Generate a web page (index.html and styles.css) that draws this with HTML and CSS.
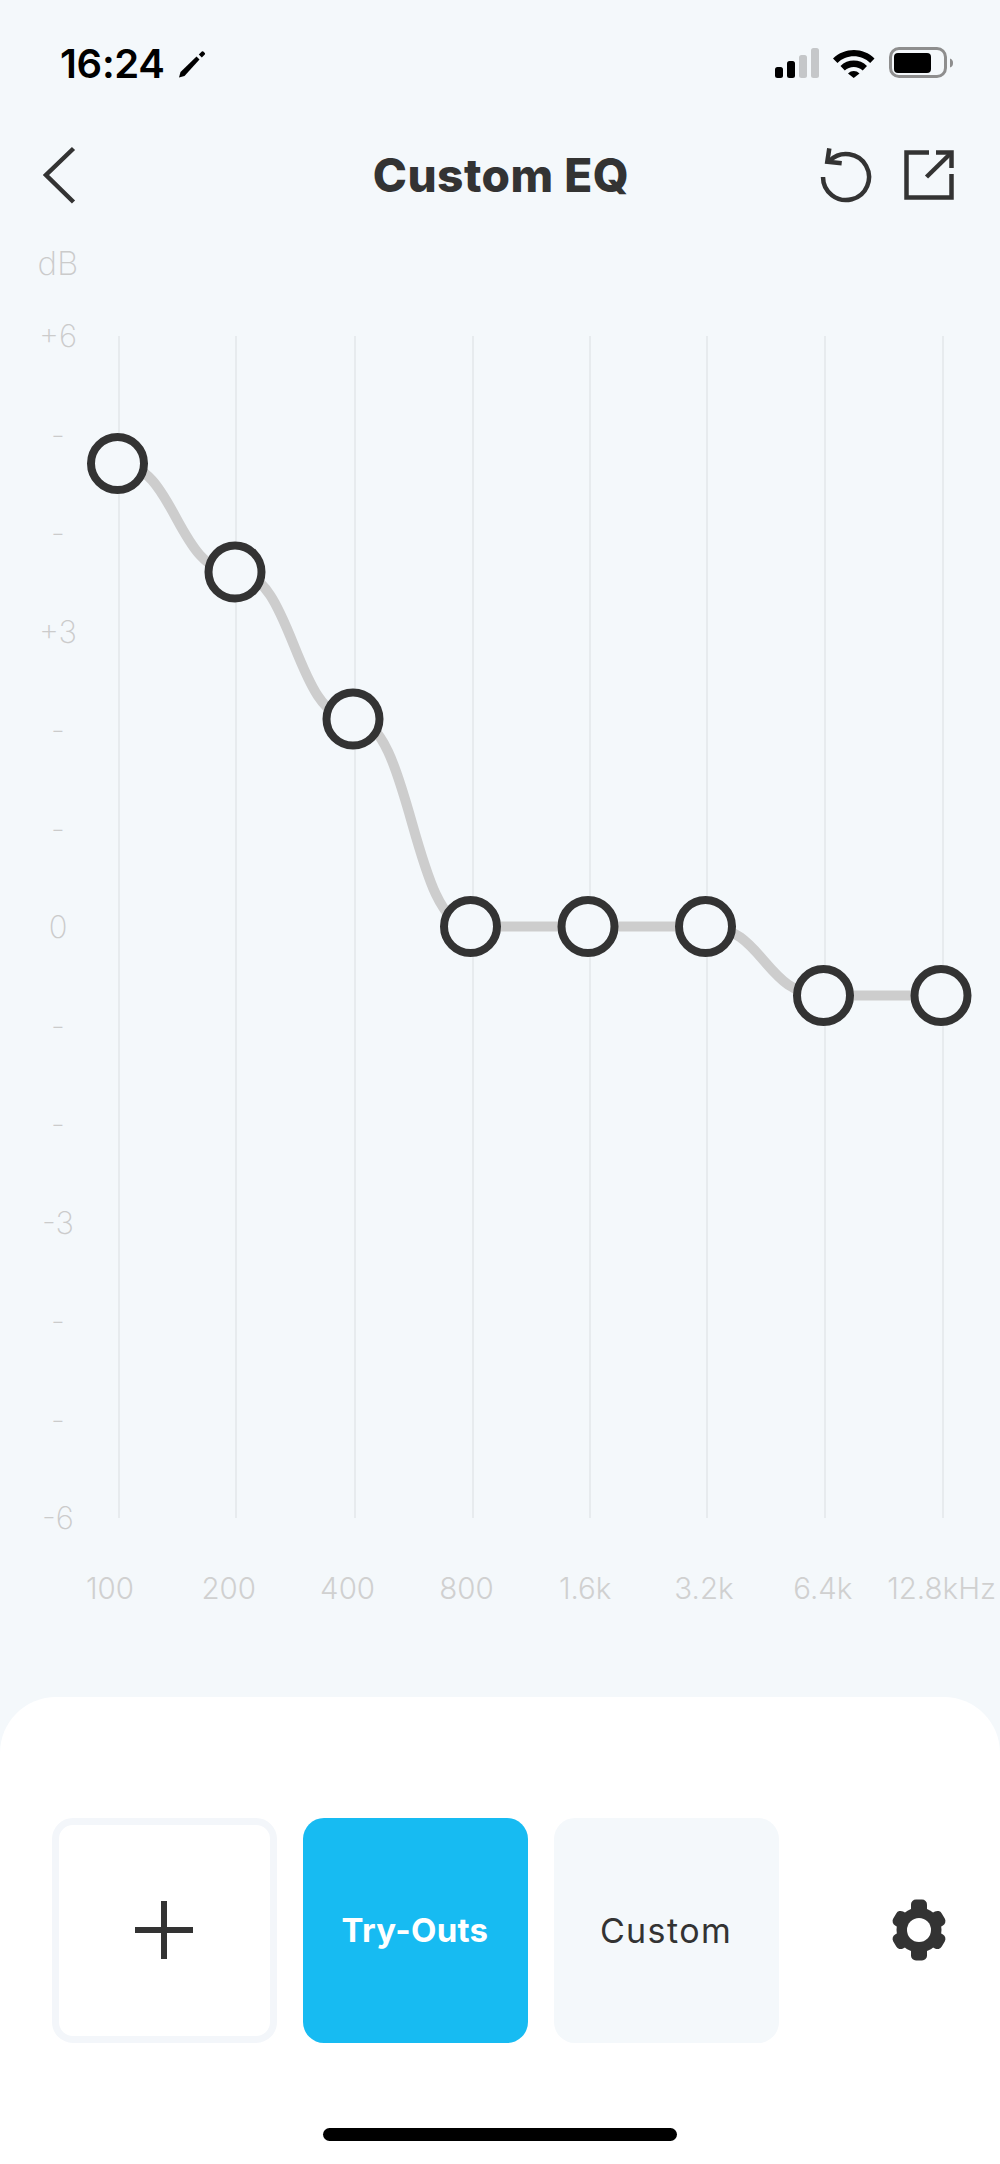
FILE: index.html
```html
<!DOCTYPE html>
<html lang="en">
<head>
<meta charset="utf-8">
<title>Custom EQ</title>
<link rel="stylesheet" href="styles.css">
</head>
<body>
<div class="page">
  <div class="status">
    <div class="status-left">
      <span class="time">16:24</span>
      <svg class="pencil" width="28" height="28" viewBox="0 0 28 28"><path class="solid" d="M1 27.500 2.500 22 18.500 6.500 21.500 9.500 6.500 26Z"/><path class="solid" d="M20.800 4.500 23.800 1.500Q24.500 .9 25.300 1.500L26.800 3Q27.400 3.800 26.800 4.500L23.800 7.500Z"/></svg>
    </div>
    <div class="status-right">
      <svg width="44" height="30" viewBox="0 0 44 30"><rect class="solid" x="0" y="19" width="8" height="11" rx="2.500"/><rect class="solid" x="12" y="13" width="8" height="17" rx="2.500"/><rect class="dim" x="24" y="7" width="8" height="23" rx="2.500"/><rect class="dim" x="36" y="0" width="8" height="30" rx="2.500"/></svg>
      <svg width="42" height="32" viewBox="0 0 42 32"><path class="solid" d="M0 12.500C11.500 1 30.500 1 41.500 12.500L37.200 17C28.500 8 13 8 4.500 17Z"/><path class="solid" d="M7.500 20C14.500 12.800 27 12.800 34 20L29.700 24.500C25 19.700 16.500 19.700 11.800 24.500Z"/><path class="solid" d="M15 27.500C18.300 24.200 23.200 24.200 26.500 27.500L20.700 32Z"/></svg>
      <svg class="battery" width="66" height="32" viewBox="0 0 66 32"><rect class="batt-frame" x="1.500" y="2.500" width="55" height="28" rx="8.500"/><rect class="solid" x="5" y="7" width="37" height="20" rx="4"/><path class="batt-nub" d="M61 12.500C63.500 13.500 64 15 64 17S63.500 20.500 61 21.500Z"/></svg>
    </div>
  </div>

  <header class="header">
    <svg class="back" width="34" height="58" viewBox="0 0 34 58"><path class="ink-thin" d="M30.500 2.500 3 29 30.500 56"/></svg>
    <h1 class="title">Custom EQ</h1>
    <div class="actions">
      <svg width="54" height="58" viewBox="0 0 54 58"><path class="ink" d="M3 31A23 23 0 1 0 10 14.500"/><path class="ink" d="M9.300 2.300 7.300 15.700 21.700 17.300"/></svg>
      <svg width="50" height="50" viewBox="0 0 50 50"><path class="ink" d="M25 2.500H2.500V47.500H47.500V24"/><path class="ink" d="M22.500 27 47 3"/><path class="ink" d="M32 2.500H47.500V18"/></svg>
    </div>
  </header>

  <div class="unit">dB</div>

  <section class="chart">
    <div class="y-axis">
      <span>+6</span><span>-</span><span>-</span><span>+3</span><span>-</span><span>-</span><span>0</span><span>-</span><span>-</span><span>-3</span><span>-</span><span>-</span><span>-6</span>
    </div>
    <svg class="plot" width="915" height="1220" viewBox="85 320 915 1220">
      <g class="grid">
        <path d="M119 336V1518"/><path d="M236 336V1518"/><path d="M355 336V1518"/><path d="M473 336V1518"/><path d="M590 336V1518"/><path d="M707 336V1518"/><path d="M825 336V1518"/><path d="M943 336V1518"/>
      </g>
      <path class="curve" d="M117.500 463.500C176 463.500 176 572 235 572C294 572 294 719 353 719C412 719 412 926.500 470.500 926.500H705.500C764 926.500 764 995.500 823.500 995.500H941"/>
      <g class="nodes">
        <circle cx="117.500" cy="463.500" r="26.500"/><circle cx="235" cy="572" r="26.500"/><circle cx="353" cy="719" r="26.500"/><circle cx="470.500" cy="926.500" r="26.500"/><circle cx="588" cy="926.500" r="26.500"/><circle cx="705.500" cy="926.500" r="26.500"/><circle cx="823.500" cy="995.500" r="26.500"/><circle cx="941" cy="995.500" r="26.500"/>
      </g>
    </svg>
  </section>

  <div class="x-axis">
    <span>100</span><span>200</span><span>400</span><span>800</span><span>1.6k</span><span>3.2k</span><span>6.4k</span><span>12.8kHz</span>
  </div>

  <section class="sheet">
    <div class="presets">
      <div class="preset preset-add">
        <svg width="58" height="58" viewBox="0 0 58 58"><path class="plus" d="M29 0V58M0 29H58"/></svg>
      </div>
      <div class="preset preset-active">Try-Outs</div>
      <div class="preset preset-plain">Custom</div>
      <svg class="gear" width="62" height="62" viewBox="0 0 62 62">
        <g class="gear-body">
          <rect x="23" y="0.500" width="16" height="61" rx="5"/>
          <rect x="23" y="3" width="16" height="56" rx="5" transform="rotate(60 31 31)"/>
          <rect x="23" y="3" width="16" height="56" rx="5" transform="rotate(120 31 31)"/>
          <circle cx="31" cy="31" r="22.500"/>
        </g>
        <circle class="gear-hole" cx="31" cy="31" r="12"/>
      </svg>
    </div>
    <div class="home-bar"></div>
  </section>
</div>
</body>
</html>
```
FILE: styles.css
```css
* { box-sizing: border-box; }
html, body { margin: 0; padding: 0; }
body { background: #f4f8fb; font-family: Inter, "Liberation Sans", sans-serif; }
.page { width: 1000px; height: 2164px; display: flex; flex-direction: column; overflow: hidden; }

.solid { fill: #000; }
.dim { fill: #c5c7c9; }
.ink { fill: none; stroke: #333; stroke-width: 4.500; }
.ink-thin { fill: none; stroke: #333; stroke-width: 4.500; }

.status { height: 130px; padding: 44px 45px 0 60px; display: flex; justify-content: space-between; align-items: flex-start; }
.status-left { display: flex; align-items: center; gap: 13px; }
.time { font-size: 40px; line-height: 40px; font-weight: 600; color: #000; letter-spacing: -0.3px; }
.status-right { display: flex; align-items: flex-end; gap: 14px; padding-top: 2px; }
.batt-frame { fill: none; stroke: #8e8e8e; stroke-width: 3; }
.batt-nub { fill: #8e8e8e; }

.header { height: 90px; padding: 0 46px 0 43px; display: flex; align-items: center; position: relative; }
.back { display: block; }
.title { position: absolute; left: 2px; right: 0; top: 0; bottom: 0; margin: 0; display: flex; align-items: center; justify-content: center; font-size: 46px; font-weight: 800; color: #333; letter-spacing: 0.5px; }
.actions { margin-left: auto; display: flex; align-items: center; gap: 30px; }

.unit { width: 116px; height: 34px; margin-top: 26px; text-align: center; font-size: 33px; line-height: 34px; font-weight: 200; color: #cbcbcb; }

.chart { height: 1277px; margin-top: -19px; display: flex; position: relative; }
.y-axis { width: 116px; display: flex; flex-direction: column; margin-top: 25.500px; flex: none; }
.y-axis span { height: 98.500px; display: flex; align-items: center; justify-content: center; font-size: 31px; font-weight: 200; color: #cbcbcb; flex: none; }
.plot { display: block; margin-top: 59px; margin-left: -31px; flex: none; }
.grid path { stroke: #e7ebee; stroke-width: 2; fill: none; }
.curve { fill: none; stroke: #cdcdcd; stroke-width: 10; }
.nodes circle { fill: #f4f8fb; stroke: #333; stroke-width: 8; }

.x-axis { display: grid; grid-template-columns: repeat(8, 118.800px); padding-left: 50.600px; margin-top: 30px; height: 60px; }
.x-axis span { display: flex; justify-content: center; white-space: nowrap; font-size: 29.500px; font-weight: 300; color: #d0d0d0; line-height: 40px; }

.sheet { margin-top: auto; height: 467px; background: #fff; border-radius: 56px 56px 0 0; padding-top: 120.500px; display: flex; flex-direction: column; align-items: center; }
.presets { width: 100%; padding-left: 51.500px; display: flex; align-items: center; gap: 26px; }
.preset { width: 225px; height: 225px; border-radius: 21px; display: flex; align-items: center; justify-content: center; font-size: 33px; flex: none; }
.preset-add { border: 7.500px solid #f3f6fa; background: #fff; }
.preset-active { background: #17bbf2; color: #fff; font-weight: 700; letter-spacing: 0.3px; }
.preset-plain { background: #f4f8fb; color: #333; font-size: 34px; letter-spacing: 1.400px; font-weight: 400; }
.plus { fill: none; stroke: #333; stroke-width: 6; }
.gear { margin-left: 83px; display: block; }
.gear-body { fill: #333; }
.gear-hole { fill: #fff; }
.home-bar { width: 354px; height: 13px; margin-top: 85px; border-radius: 7px; background: #000; flex: none; }
```
